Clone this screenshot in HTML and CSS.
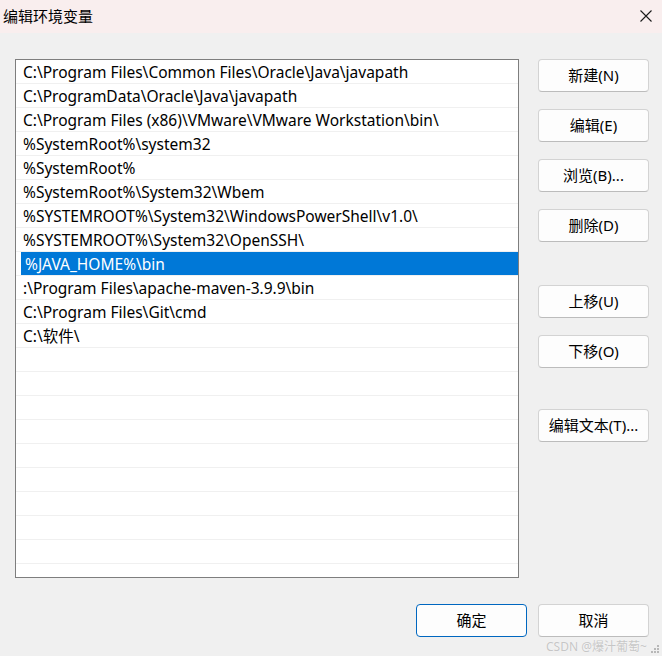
FILE: index.html
```html
<!DOCTYPE html>
<html lang="zh-CN">
<head>
<meta charset="utf-8">
<title>编辑环境变量</title>
<link rel="stylesheet" href="styles.css">
</head>
<body>
<div class="window">
  <div class="titlebar">
    <span class="title">编辑环境变量</span>
    <span class="close">
      <svg width="12" height="12" viewBox="0 0 12 12"><path d="M0.5 0.5 L11.5 11.5 M11.5 0.5 L0.5 11.5" stroke="#1a1a1a" stroke-width="1.1" fill="none"/></svg>
    </span>
  </div>
  <div class="content">
    <div class="main">
      <div class="list">
        <div class="row">C:\Program Files\Common Files\Oracle\Java\javapath</div>
        <div class="row">C:\ProgramData\Oracle\Java\javapath</div>
        <div class="row">C:\Program Files (x86)\VMware\VMware Workstation\bin\</div>
        <div class="row">%SystemRoot%\system32</div>
        <div class="row">%SystemRoot%</div>
        <div class="row">%SystemRoot%\System32\Wbem</div>
        <div class="row">%SYSTEMROOT%\System32\WindowsPowerShell\v1.0\</div>
        <div class="row">%SYSTEMROOT%\System32\OpenSSH\</div>
        <div class="row selected"><span class="sel">%JAVA_HOME%\bin</span></div>
        <div class="row">:\Program Files\apache-maven-3.9.9\bin</div>
        <div class="row">C:\Program Files\Git\cmd</div>
        <div class="row">C:\软件\</div>
        <div class="row"></div>
        <div class="row"></div>
        <div class="row"></div>
        <div class="row"></div>
        <div class="row"></div>
        <div class="row"></div>
        <div class="row"></div>
        <div class="row"></div>
        <div class="row"></div>
        <div class="row"></div>
      </div>
      <div class="side">
        <button class="btn">新建(N)</button>
        <button class="btn">编辑(E)</button>
        <button class="btn">浏览(B)...</button>
        <button class="btn">删除(D)</button>
        <button class="btn group2">上移(U)</button>
        <button class="btn">下移(O)</button>
        <button class="btn group3">编辑文本(T)...</button>
      </div>
    </div>
    <div class="footer">
      <button class="btn default">确定</button>
      <button class="btn">取消</button>
    </div>
  </div>
  <div class="watermark">CSDN @爆汁葡萄~</div>
  <div class="grip">
    <svg width="8" height="8" viewBox="0 0 8 8" fill="#b8b8b8">
      <rect x="6" y="0" width="2" height="2"/>
      <rect x="3" y="3" width="2" height="2"/><rect x="6" y="3" width="2" height="2"/>
      <rect x="0" y="6" width="2" height="2"/><rect x="3" y="6" width="2" height="2"/><rect x="6" y="6" width="2" height="2"/>
    </svg>
  </div>
</div>
</body>
</html>
```

FILE: styles.css
```css
* { box-sizing: border-box; }
html, body { margin: 0; padding: 0; }
body {
  background: #f0f0f0;
  font-family: "Noto Sans", "Noto Sans CJK SC", sans-serif;
  font-size: 15px;
  color: #000;
}
.window {
  position: relative;
  width: 662px;
  height: 656px;
  background: #f0f0f0;
  overflow: hidden;
}
.titlebar {
  height: 33px;
  background: #f9eeee;
  display: flex;
  align-items: center;
  justify-content: space-between;
  padding: 0 10px 2px 3px;
}
.title {
  font-family: "Noto Sans CJK SC", sans-serif;
  font-size: 15px;
  color: #000;
}
.close { display: flex; align-items: center; }
.content {
  padding: 26px 13px 0 15px;
}
.main {
  display: flex;
  gap: 19px;
}
.list {
  width: 504px;
  height: 519px;
  border: 1px solid #7e7e7e;
  background: #fff;
  overflow: hidden;
  flex: none;
}
.row {
  height: 24px;
  line-height: 25px;
  font-size: 15.5px;
  border-bottom: 1px solid #f0f0f0;
  padding-left: 7px;
  white-space: nowrap;
  overflow: hidden;
}
.row.selected {
  padding-left: 5px;
}
.sel {
  display: block;
  height: 23px;
  background: #0078d7;
  color: #fff;
  padding-left: 4px;
}
.side {
  display: flex;
  flex-direction: column;
  gap: 17px;
}
.btn {
  width: 111px;
  height: 33px;
  background: #fdfdfd;
  border: 1px solid #d3d3d3;
  border-bottom-color: #bcbcbc;
  border-radius: 4px;
  font-family: "Noto Sans", "Noto Sans CJK SC", sans-serif;
  font-size: 15px;
  color: #000;
  padding: 0;
  line-height: 31px;
  text-align: center;
}
.group2 { margin-top: 26px; }
.group3 { margin-top: 24px; }
.footer {
  display: flex;
  justify-content: flex-end;
  gap: 11px;
  margin-top: 26px;
}
.btn.default {
  border: 1px solid #0067c0;
}
.watermark {
  position: absolute;
  left: 546px;
  top: 637px;
  font-family: "Noto Sans", "Noto Sans CJK SC", sans-serif;
  font-size: 12px;
  color: #c6c6c6;
  white-space: nowrap;
  text-shadow: 0 0 1px #fff;
}
.grip {
  position: absolute;
  right: 3px;
  bottom: 3px;
  display: flex;
}
```
